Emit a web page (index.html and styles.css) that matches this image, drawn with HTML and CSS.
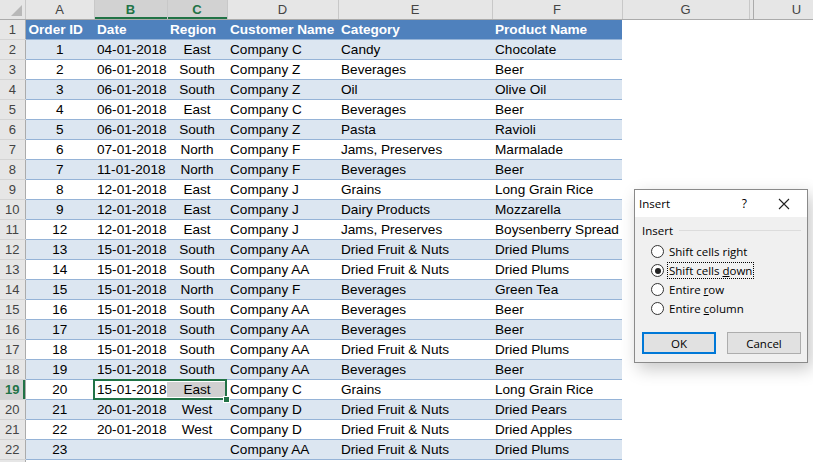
FILE: index.html
```html
<!DOCTYPE html>
<html>
<head>
    <title>Orders - Insert</title>
    <link rel="stylesheet" href="styles.css">
</head>
<body>
    <table class="sheet">
        <colgroup>
            <col class="c-hdr"><col class="c-a"><col class="c-b"><col class="c-c"><col class="c-d">
            <col class="c-e"><col class="c-f"><col class="c-g"><col class="c-gap"><col class="c-u">
        </colgroup>
        <tr class="col-heads">
            <th class="corner"><span class="tri"></span></th>
            <th>A</th><th class="sel">B</th><th class="sel">C</th><th>D</th>
            <th>E</th><th>F</th><th>G</th><th class="gap"></th><th>U</th>
        </tr>
        <tr class="head">
            <th class="rh">1</th>
            <td>Order ID</td><td>Date</td><td>Region</td><td>Customer Name</td>
            <td>Category</td><td>Product Name</td><td class="blank"></td><td class="blank"></td><td class="blank"></td>
        </tr>
        <tr class="band"><th class="rh">2</th><td class="mid">1</td><td>04-01-2018</td><td class="mid">East</td><td>Company C</td><td>Candy</td><td>Chocolate</td><td class="blank" colspan="3"></td></tr>
        <tr><th class="rh">3</th><td class="mid">2</td><td>06-01-2018</td><td class="mid">South</td><td>Company Z</td><td>Beverages</td><td>Beer</td><td class="blank" colspan="3"></td></tr>
        <tr class="band"><th class="rh">4</th><td class="mid">3</td><td>06-01-2018</td><td class="mid">South</td><td>Company Z</td><td>Oil</td><td>Olive Oil</td><td class="blank" colspan="3"></td></tr>
        <tr><th class="rh">5</th><td class="mid">4</td><td>06-01-2018</td><td class="mid">East</td><td>Company C</td><td>Beverages</td><td>Beer</td><td class="blank" colspan="3"></td></tr>
        <tr class="band"><th class="rh">6</th><td class="mid">5</td><td>06-01-2018</td><td class="mid">South</td><td>Company Z</td><td>Pasta</td><td>Ravioli</td><td class="blank" colspan="3"></td></tr>
        <tr><th class="rh">7</th><td class="mid">6</td><td>07-01-2018</td><td class="mid">North</td><td>Company F</td><td>Jams, Preserves</td><td>Marmalade</td><td class="blank" colspan="3"></td></tr>
        <tr class="band"><th class="rh">8</th><td class="mid">7</td><td>11-01-2018</td><td class="mid">North</td><td>Company F</td><td>Beverages</td><td>Beer</td><td class="blank" colspan="3"></td></tr>
        <tr><th class="rh">9</th><td class="mid">8</td><td>12-01-2018</td><td class="mid">East</td><td>Company J</td><td>Grains</td><td>Long Grain Rice</td><td class="blank" colspan="3"></td></tr>
        <tr class="band"><th class="rh">10</th><td class="mid">9</td><td>12-01-2018</td><td class="mid">East</td><td>Company J</td><td>Dairy Products</td><td>Mozzarella</td><td class="blank" colspan="3"></td></tr>
        <tr><th class="rh">11</th><td class="mid">12</td><td>12-01-2018</td><td class="mid">East</td><td>Company J</td><td>Jams, Preserves</td><td>Boysenberry Spread</td><td class="blank" colspan="3"></td></tr>
        <tr class="band"><th class="rh">12</th><td class="mid">13</td><td>15-01-2018</td><td class="mid">South</td><td>Company AA</td><td>Dried Fruit &amp; Nuts</td><td>Dried Plums</td><td class="blank" colspan="3"></td></tr>
        <tr><th class="rh">13</th><td class="mid">14</td><td>15-01-2018</td><td class="mid">South</td><td>Company AA</td><td>Dried Fruit &amp; Nuts</td><td>Dried Plums</td><td class="blank" colspan="3"></td></tr>
        <tr class="band"><th class="rh">14</th><td class="mid">15</td><td>15-01-2018</td><td class="mid">North</td><td>Company F</td><td>Beverages</td><td>Green Tea</td><td class="blank" colspan="3"></td></tr>
        <tr><th class="rh">15</th><td class="mid">16</td><td>15-01-2018</td><td class="mid">South</td><td>Company AA</td><td>Beverages</td><td>Beer</td><td class="blank" colspan="3"></td></tr>
        <tr class="band"><th class="rh">16</th><td class="mid">17</td><td>15-01-2018</td><td class="mid">South</td><td>Company AA</td><td>Beverages</td><td>Beer</td><td class="blank" colspan="3"></td></tr>
        <tr><th class="rh">17</th><td class="mid">18</td><td>15-01-2018</td><td class="mid">South</td><td>Company AA</td><td>Dried Fruit &amp; Nuts</td><td>Dried Plums</td><td class="blank" colspan="3"></td></tr>
        <tr class="band"><th class="rh">18</th><td class="mid">19</td><td>15-01-2018</td><td class="mid">South</td><td>Company AA</td><td>Beverages</td><td>Beer</td><td class="blank" colspan="3"></td></tr>
        <tr class="cur"><th class="rh">19</th><td class="mid">20</td><td class="active">15-01-2018<span class="range"><span class="handle"></span></span></td><td class="mid picked">East</td><td>Company C</td><td>Grains</td><td>Long Grain Rice</td><td class="blank" colspan="3"></td></tr>
        <tr class="band"><th class="rh">20</th><td class="mid">21</td><td>20-01-2018</td><td class="mid">West</td><td>Company D</td><td>Dried Fruit &amp; Nuts</td><td>Dried Pears</td><td class="blank" colspan="3"></td></tr>
        <tr><th class="rh">21</th><td class="mid">22</td><td>20-01-2018</td><td class="mid">West</td><td>Company D</td><td>Dried Fruit &amp; Nuts</td><td>Dried Apples</td><td class="blank" colspan="3"></td></tr>
        <tr class="band"><th class="rh">22</th><td class="mid">23</td><td></td><td></td><td>Company AA</td><td>Dried Fruit &amp; Nuts</td><td>Dried Plums</td><td class="blank" colspan="3"></td></tr>
        <tr class="empty"><th class="rh"></th><td colspan="9" class="blank"></td></tr>
    </table>

    <div class="dialog">
        <div class="title">
            <span class="caption">Insert</span>
            <span class="help">?</span>
            <svg class="close" width="12" height="12" viewBox="0 0 12 12"><path d="M1 1L11 11M11 1L1 11" stroke="#222" stroke-width="1.1" fill="none"/></svg>
        </div>
        <div class="body">
            <div class="group"><span>Insert</span><i></i></div>
            <div class="opts">
                <div class="opt"><span class="radio"></span><span>Shift cells ri<u>g</u>ht</span></div>
                <div class="opt"><span class="radio on"></span><span class="focus">Shift cells <u>d</u>own</span></div>
                <div class="opt"><span class="radio"></span><span>Entire <u>r</u>ow</span></div>
                <div class="opt"><span class="radio"></span><span>Entire <u>c</u>olumn</span></div>
            </div>
            <div class="buttons">
                <span class="btn ok">OK</span>
                <span class="btn">Cancel</span>
            </div>
        </div>
    </div>
</body>
</html>
```

FILE: styles.css
```css
body { margin: 0; background: #fff; overflow: hidden; font-family: "Liberation Sans", Arial, sans-serif; }

/* grid */
.sheet { border-collapse: collapse; table-layout: fixed; width: 840px; font-size: 13.6px; color: #000; }
.c-hdr { width: 25px; }
.c-a { width: 69px; }
.c-b { width: 73px; }
.c-c { width: 60px; }
.c-d { width: 111px; }
.c-e { width: 154px; }
.c-f { width: 130px; }
.c-g { width: 127px; }
.c-gap { width: 4px; }
.c-u { width: 87px; }

.sheet td, .sheet th { height: 19px; padding: 0 3px; white-space: nowrap; overflow: hidden; border-bottom: 1px solid #95b3d7; text-align: left; font-weight: normal; }
.sheet td.blank { border-bottom: 1px solid #fff; background: #fff; }

.col-heads th { height: 19px; background: #e6e6e6; color: #444; text-align: center; font-size: 13px; border-right: 1px solid #c8c8c8; border-bottom: 1px solid #ababab; padding: 0; }
.col-heads th.sel { background: #d2d2d2; color: #217346; font-weight: bold; box-shadow: inset 0 -2px 0 #217346; }
.col-heads th.gap { border-right: 1px solid #ababab; }
.col-heads .corner { position: relative; }
.tri { position: absolute; right: 3px; bottom: 3px; width: 0; height: 0; border-left: 11px solid transparent; border-bottom: 11px solid #b8b8b8; }

.sheet th.rh { background: #e6e6e6; color: #444; text-align: center; font-size: 13px; padding: 0; border-right: 1px solid #ababab; border-bottom: 1px solid #d4d4d4; }
.cur th.rh { background: #d2d2d2; color: #217346; font-weight: bold; box-shadow: inset -2px 0 0 #217346; }

.head td { background: #4f81bd; color: #fff; font-weight: bold; }
.head td.blank { background: #fff; }
.band td { background: #dce6f1; }
.sheet td.mid { text-align: center; }

/* selected range B19:C19 */
.cur td.active { position: relative; overflow: visible; }
.cur td.picked { background: #d0d0d0; box-shadow: inset 0 2px 0 #fff, inset -2px 0 0 #fff, inset 0 -2px 0 #fff; }
.range { position: absolute; left: -1px; top: -1px; width: 130px; height: 17px; border: 2px solid #217346; pointer-events: none; }
.handle { position: absolute; right: -5px; bottom: -5px; width: 5px; height: 5px; background: #217346; border: 1px solid #fff; }

.empty th.rh { border-bottom: none; }

/* dialog */
.dialog { position: absolute; left: 634px; top: 189px; width: 172px; height: 172px; border: 1px solid #8a8a8a; background: #f0f0f0; box-shadow: 4px 6px 16px rgba(0,0,0,0.22); font-family: "Open Sans", "Noto Sans", sans-serif; font-size: 11.5px; color: #000; }
.title { height: 27px; background: #fff; display: flex; align-items: center; padding: 0 0 0 4px; }
.caption { flex: 1; }
.help { margin-right: 31px; font-size: 12px; }
.close { margin-right: 17px; }
.body { padding: 4px 6px 0 7px; }
.group { display: flex; align-items: center; gap: 6px; height: 18px; }
.group i { flex: 1; border-top: 1px solid #dcdcdc; }
.opts { padding: 3px 0 0 9px; }
.opt { display: flex; align-items: center; gap: 5px; height: 19px; }
.radio { width: 11px; height: 11px; border: 1px solid #333; border-radius: 50%; background: #fff; position: relative; }
.radio.on::after { content: ""; position: absolute; left: 2.5px; top: 2.5px; width: 6px; height: 6px; border-radius: 50%; background: #222; }
.focus { outline: 1px dotted #000; outline-offset: 0; padding: 0 1px; margin-left: -1px; }
.buttons { display: flex; justify-content: space-between; padding: 14px 0 0 0; }
.btn { width: 72px; height: 20px; border: 1px solid #adadad; background: #e1e1e1; display: flex; align-items: center; justify-content: center; }
.btn.ok { border: 2px solid #0078d7; width: 70px; height: 18px; }
```
